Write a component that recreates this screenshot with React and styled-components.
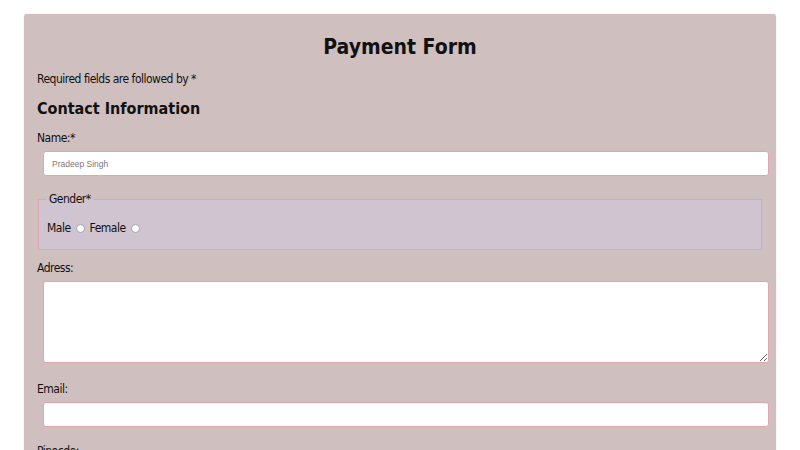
import React from "react";
import styled, { createGlobalStyle } from "styled-components";

const Global = createGlobalStyle`
  html, body { margin: 0; padding: 0; background: #ffffff; }
  body {
    font-family: "DejaVu Sans Condensed", "DejaVu Sans", Tahoma, sans-serif;
    color: #111;
  }
`;

const Page = styled.div`
  padding: 14px 24px 0 24px;
  height: 450px;
  box-sizing: border-box;
  overflow: hidden;
`;

const Card = styled.form`
  background: #cfbfbf;
  border-radius: 3px;
  box-shadow: 0 0 2px rgba(0, 0, 0, 0.12);
  padding: 20px 13px 40px 13px;
  display: flex;
  flex-direction: column;
  align-items: stretch;
`;

const Title = styled.h1`
  margin: 0;
  font-size: 21px;
  line-height: 26px;
  font-weight: bold;
  text-align: center;
`;

const Note = styled.p`
  margin: 11px 0 0 0;
  font-size: 12px;
  letter-spacing: -0.5px;
  line-height: 16px;
`;

const Section = styled.h2`
  margin: 11px 0 0 0;
  font-size: 16px;
  line-height: 22px;
  font-weight: bold;
`;

const Label = styled.label`
  display: block;
  margin-top: ${(p) => p.$top}px;
  font-size: 12px;
  letter-spacing: -0.5px;
  line-height: 16px;
`;

const TextInput = styled.input`
  display: block;
  box-sizing: border-box;
  width: 100%;
  height: 25px;
  margin: 5px 0 0 6px;
  padding: 0 8px;
  background: #fff;
  border: 1px solid #e2a5ad;
  border-radius: 3px;
  font-family: "Liberation Sans", Arial, sans-serif;
  font-size: 8.5px;
  outline: none;
  &::placeholder { color: #7a7a7a; }
`;

const TextArea = styled.textarea`
  display: block;
  box-sizing: border-box;
  width: 100%;
  height: 82px;
  margin: 5px 0 0 6px;
  padding: 6px 8px;
  background: #fff;
  border: 1px solid #e2a5ad;
  border-radius: 3px;
  resize: vertical;
  outline: none;
`;

const Fieldset = styled.fieldset`
  margin: 15px 0 0 1px;
  width: 724px;
  box-sizing: border-box;
  padding: 13px 8px 13px 8px;
  background: #cfc4d0;
  border: 1px solid #e2a5ad;
`;

const Legend = styled.legend`
  padding: 0 2px;
  margin-left: 0;
  font-size: 12px;
  letter-spacing: -0.5px;
  line-height: 16px;
`;

const RadioRow = styled.div`
  display: flex;
  align-items: center;
  font-size: 12px;
  letter-spacing: -0.5px;
  line-height: 16px;
`;

const RadioLabel = styled.label`
  display: inline-flex;
  align-items: center;
`;

const Radio = styled.input.attrs({ type: "radio" })`
  appearance: none;
  -webkit-appearance: none;
  width: 9px;
  height: 9px;
  margin: 0 5px 0 5px;
  border-radius: 50%;
  background: #fff;
  border: 1px solid #a8a0a8;
  box-sizing: border-box;
`;

export default function App() {
  return (
    <>
      <Global />
      <Page>
        <Card onSubmit={(e) => e.preventDefault()}>
          <Title>Payment Form</Title>
          <Note>Required fields are followed by *</Note>
          <Section>Contact Information</Section>
          <Label $top={10}>Name:*</Label>
          <TextInput placeholder="Pradeep Singh" />
          <Fieldset>
            <Legend>Gender*</Legend>
            <RadioRow>
              <RadioLabel>
                Male
                <Radio name="gender" />
              </RadioLabel>
              <RadioLabel>
                Female
                <Radio name="gender" />
              </RadioLabel>
            </RadioRow>
          </Fieldset>
          <Label $top={10}>Adress:</Label>
          <TextArea />
          <Label $top={18}>Email:</Label>
          <TextInput />
          <Label $top={16}>Pinocde:</Label>
          <TextInput />
        </Card>
      </Page>
    </>
  );
}
